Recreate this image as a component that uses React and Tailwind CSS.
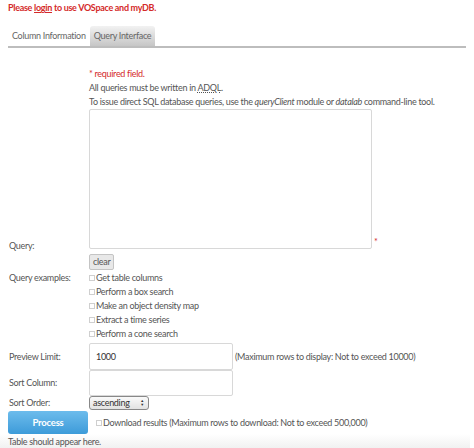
import React from 'react';

const font = { fontFamily: 'Lato, "Noto Sans", sans-serif' };

const examples = [
  'Get table columns',
  'Perform a box search',
  'Make an object density map',
  'Extract a time series',
  'Perform a cone search',
];

function Row({ label, children, className = '' }) {
  return (
    <div className={`flex ${className}`}>
      <div className="w-[81px] shrink-0 pl-[1px]">{label}</div>
      <div className="flex-1">{children}</div>
    </div>
  );
}

function Box() {
  return <span className="mr-[1px] inline-block h-[6px] w-[6px] border border-[#cfcfcf] bg-white" />;
}

export default function App() {
  return (
    <div className="h-[448px] overflow-hidden bg-white text-[9px] leading-[14px] tracking-[-0.3px] text-[#555]" style={font}>
      <div className="px-2 pt-[1px]">
        <p className="text-[9px] font-bold leading-[14px] tracking-[-0.3px] text-[#d42a2a]">
          Please <span className="underline decoration-[#d42a2a]">login</span> to use VOSpace and myDB.
        </p>

        <div className="mt-[11px] flex h-[22px] items-end border-b-2 border-[#bdbdbd]">
          <div className="flex h-[20px] w-[82px] items-center pl-[4px] text-[#666]">Column Information</div>
          <div className="flex h-[20px] w-[65px] items-center justify-center rounded-t-[3px] bg-gradient-to-b from-[#f2f2f2] to-[#c6c6c6] text-[#666]">
            Query Interface
          </div>
        </div>

        <div className="mt-[19px] pl-[81px]">
          <p className="text-[#d42a2a]">* required field.</p>
          <p>All queries must be written in <span className="underline decoration-dotted">ADQL</span>.</p>
          <p>
            To issue direct SQL database queries, use the <i>queryClient</i> module or <i>datalab</i> command-line tool.
          </p>
        </div>

        <Row className="items-end" label={<span className="relative top-[4px]">Query:</span>}>
          <div className="flex items-end">
            <div className="h-[140px] w-[283px] rounded-[2px] border border-[#d8d8d8] bg-white" />
            <span className="ml-[2px] text-[#d42a2a]">*</span>
          </div>
        </Row>

        <Row className="mt-[5px]" label="">
          <button className="h-[16px] rounded-[2px] border border-[#c4c4c4] bg-[#e8e8e8] px-[3px] text-[9px] leading-[14px] text-[#555]">
            clear
          </button>
        </Row>

        <Row className="mt-[1px]" label="Query examples:">
          <div className="flex flex-col">
            {examples.map((e) => (
              <label key={e} className="flex h-[14px] items-center">
                <Box />
                <span>{e}</span>
              </label>
            ))}
          </div>
        </Row>

        <Row className="mt-[2px] items-center" label="Preview Limit:">
          <div className="flex items-center">
            <div className="flex h-[27px] w-[144px] items-center rounded-[2px] border border-[#d8d8d8] px-[6px] text-[#333]">1000</div>
            <span className="ml-[2px]">(Maximum rows to display: Not to exceed 10000)</span>
          </div>
        </Row>

        <Row className="items-center" label="Sort Column:">
          <div className="h-[26px] w-[144px] rounded-[2px] border border-[#d8d8d8]" />
        </Row>

        <Row className="items-center" label="Sort Order:">
          <div className="flex h-[14px] w-[60px] items-center justify-between rounded-[3px] border border-[#888] bg-gradient-to-b from-[#fafafa] to-[#e2e2e2] pl-[3px] pr-[2px] text-[#333]">
            <span>ascending</span>
            <span className="flex h-[10px] w-[8px] flex-col items-center justify-center text-[4px] leading-[4px] text-[#333]">
              <span>▲</span>
              <span>▼</span>
            </span>
          </div>
        </Row>

        <div className="mt-[1px] flex items-center">
          <button className="h-[23px] w-[80px] rounded-[3px] bg-gradient-to-b from-[#6cbcec] to-[#3c9bd9] text-[9.5px] font-bold tracking-[-0.2px] text-white">
            Process
          </button>
          <label className="ml-[8px] flex items-center">
            <Box />
            <span>Download results (Maximum rows to download: Not to exceed 500,000)</span>
          </label>
        </div>
      </div>

      <div className="mr-[4px] h-[16px] bg-gradient-to-b from-white to-[#efefef] px-2 pt-[1px]">
        Table should appear here.
      </div>
    </div>
  );
}
